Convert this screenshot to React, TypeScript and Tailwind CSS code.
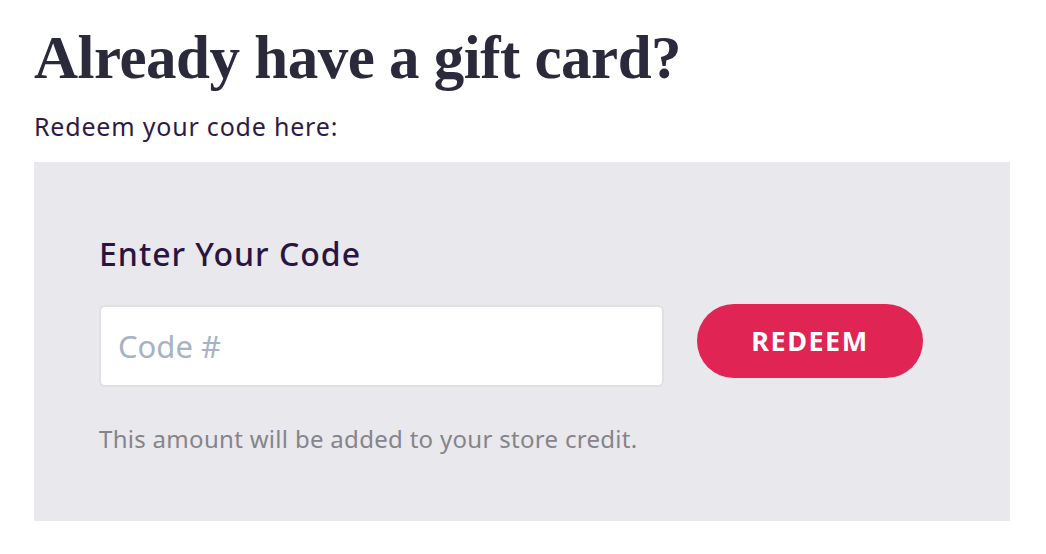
import React from "react";

export default function App() {
  return (
    <div className="w-[1046px] h-[554px] bg-white pl-[34px] pr-[36px] pt-[22px]" style={{ fontFamily: '"Noto Sans", "Open Sans", sans-serif' }}>
      <h1 className="text-[61px] leading-[72px] font-bold text-[#2b2a3d] tracking-[-0.5px]" style={{ fontFamily: '"Liberation Serif", "DejaVu Serif", serif' }}>
        Already have a gift card?
      </h1>
      <p className="mt-[16px] text-[25px] leading-[32px] tracking-[0.8px] text-[#2f1a47]">Redeem your code here:</p>
      <div className="mt-[20px] bg-[#e9e8ed] h-[359px] pl-[65px] pt-[70px]">
        <h2 className="text-[32px] leading-[44px] tracking-[1px] font-medium text-[#2b1540]">Enter Your Code</h2>
        <div className="mt-[29px] flex items-start gap-[33px]">
          <input
            className="w-[565px] h-[82px] bg-white border-2 border-[#e0e0e3] rounded-[6px] px-[17px] text-[31px] text-[#333] placeholder:text-[#a5b3c4] outline-none"
            placeholder="Code #"
          />
          <button className="w-[226px] h-[74px] -mt-[1px] rounded-full bg-[#e02454] text-white text-[27px] font-bold tracking-[1.5px]">
            REDEEM
          </button>
        </div>
        <p className="mt-[36px] text-[24px] leading-[32px] tracking-[0.3px] text-[#85848a]">This amount will be added to your store credit.</p>
      </div>
    </div>
  );
}
